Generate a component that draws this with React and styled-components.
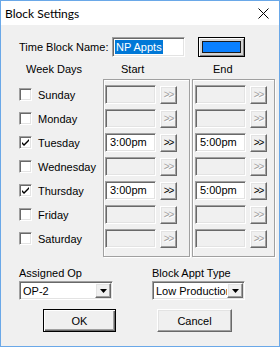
import styled, { createGlobalStyle, css } from "styled-components";

const GlobalStyle = createGlobalStyle`
  html, body { margin: 0; padding: 0; background: #fff; }
  * { box-sizing: border-box; }
`;

const days = [
  { name: "Sunday", on: false },
  { name: "Monday", on: false },
  { name: "Tuesday", on: true, start: "3:00pm", end: "5:00pm" },
  { name: "Wednesday", on: false },
  { name: "Thursday", on: true, start: "3:00pm", end: "5:00pm" },
  { name: "Friday", on: false },
  { name: "Saturday", on: false },
];

const sunken = css`
  border: 1px solid;
  border-color: #a0a0a0 #fff #fff #a0a0a0;
  box-shadow: inset 1px 1px 0 #696969, inset -1px -1px 0 #e3e3e3;
`;

const raised = css`
  border: 1px solid;
  border-color: #fff #696969 #696969 #fff;
  box-shadow: inset -1px -1px 0 #a0a0a0, inset 1px 1px 0 #e3e3e3;
  background: #f0f0f0;
`;

const Window = styled.div`
  width: 280px;
  height: 347px;
  border: 1px solid #6aa8e8;
  background: #f0f0f0;
  display: flex;
  flex-direction: column;
  font-family: "Liberation Sans", Arial, sans-serif;
  font-size: 11px;
  color: #000;
`;

const TitleBar = styled.div`
  height: 24px;
  background: #fff;
  display: flex;
  align-items: center;
  justify-content: space-between;
  padding: 0 10px 0 4px;
`;

const Title = styled.div`
  font-family: Lato, "Noto Sans", sans-serif;
  font-size: 12px;
`;

const Body = styled.div`
  padding: 12px 0 0 17px;
  display: flex;
  flex-direction: column;
`;

const NameRow = styled.div`
  display: flex;
  align-items: center;
  height: 20px;
`;

const NameLabel = styled.div`
  width: 94px;
  padding-left: 1px;
`;

const NameInput = styled.div`
  ${sunken};
  width: 73px;
  height: 20px;
  background: #fff;
  padding: 2px 0 2px 2px;
  display: flex;
`;

const Selected = styled.span`
  background: #0078d7;
  color: #fff;
  padding: 0 1px;
  line-height: 14px;
`;

const ColorButton = styled.div`
  margin-left: 13px;
  width: 47px;
  height: 20px;
  border: 1px solid #000;
  background: #d4d4d4;
  box-shadow: inset 1px 1px 0 #fff, inset -1px -1px 0 #808080;
  padding: 3px;
`;

const Swatch = styled.div`
  width: 100%;
  height: 100%;
  background: #0a80ff;
  border: 1px solid #1a1a1a;
`;

const HeaderRow = styled.div`
  display: grid;
  grid-template-columns: 83px 89px 83px;
  margin-top: 6px;
  height: 13px;
  line-height: 13px;
`;

const Header = styled.div`
  padding-left: ${(p) => p.$indent}px;
`;

const Main = styled.div`
  display: grid;
  grid-template-columns: 83px 87px 83px;
  column-gap: 2px;
  margin-top: 3px;
`;

const DayList = styled.div`
  display: flex;
  flex-direction: column;
  gap: 5px;
  padding-top: 6px;
`;

const DayRow = styled.label`
  height: 19px;
  display: flex;
  align-items: center;
  gap: 6px;
  padding-left: 1px;
`;

const Check = styled.span`
  ${sunken};
  width: 13px;
  height: 13px;
  background: #fff;
  display: flex;
  align-items: center;
  justify-content: center;
`;

const Frame = styled.div`
  height: 178px;
  border: 1px solid #a0a0a0;
  box-shadow: inset 1px 1px 0 #fff, 1px 1px 0 #fff;
  padding: 5px 0 0 ${(p) => p.$pad}px;
  display: flex;
  flex-direction: column;
  gap: 5px;
`;

const TimeRow = styled.div`
  display: flex;
  align-items: center;
  gap: 4px;
  height: 19px;
`;

const TimeInput = styled.div`
  ${sunken};
  width: 51px;
  height: 19px;
  background: ${(p) => (p.$on ? "#fff" : "#f0f0f0")};
  padding: 0 0 0 4px;
  line-height: 17px;
`;

const Arrow = styled.div`
  ${raised};
  width: 17px;
  height: 18px;
  display: flex;
  align-items: center;
  justify-content: center;
  font-size: 10px;
  letter-spacing: -1px;
  color: ${(p) => (p.$on ? "#000" : "#a0a0a0")};
  text-shadow: ${(p) => (p.$on ? "none" : "1px 1px 0 #fff")};
`;

const Bottom = styled.div`
  display: grid;
  grid-template-columns: 94px 93px;
  column-gap: 39px;
  margin-top: 10px;
  padding-left: 1px;
`;

const Field = styled.div`
  display: flex;
  flex-direction: column;
  gap: 2px;
`;

const Select = styled.div`
  ${sunken};
  height: 19px;
  background: #fff;
  display: flex;
  align-items: center;
  padding: 0 1px 0 3px;
  overflow: hidden;
`;

const SelectText = styled.span`
  flex: 1;
  min-width: 0;
  white-space: nowrap;
  overflow: hidden;
`;

const DropButton = styled.div`
  ${raised};
  width: 16px;
  height: 15px;
  flex-shrink: 0;
  display: flex;
  align-items: center;
  justify-content: center;
`;

const Buttons = styled.div`
  display: flex;
  gap: 41px;
  margin-top: 9px;
  padding-left: 25px;
`;

const PushButton = styled.div`
  ${raised};
  width: ${(p) => p.$w}px;
  height: 23px;
  display: flex;
  align-items: center;
  justify-content: center;
  ${(p) =>
    p.$default &&
    css`
      border: 1px solid #000;
      box-shadow: inset 1px 1px 0 #fff, inset -1px -1px 0 #696969,
        inset -2px -2px 0 #a0a0a0;
    `}
`;

const CloseIcon = () => (
  <svg width="11" height="11" viewBox="0 0 11 11">
    <path d="M0.5 0.5L10.5 10.5M10.5 0.5L0.5 10.5" stroke="#000" strokeWidth="1" />
  </svg>
);

const Tick = () => (
  <svg width="9" height="9" viewBox="0 0 9 9">
    <path d="M1 4l2 2 5-5v2l-5 5-2-2z" fill="#000" />
  </svg>
);

const Caret = () => (
  <svg width="7" height="4" viewBox="0 0 7 4">
    <path d="M0 0h7L3.5 4z" fill="#000" />
  </svg>
);

export default function App() {
  return (
    <Window>
      <GlobalStyle />
      <TitleBar>
        <Title>Block Settings</Title>
        <CloseIcon />
      </TitleBar>
      <Body>
        <NameRow>
          <NameLabel>Time Block Name:</NameLabel>
          <NameInput>
            <Selected>NP Appts</Selected>
          </NameInput>
          <ColorButton>
            <Swatch />
          </ColorButton>
        </NameRow>

        <HeaderRow>
          <Header $indent={8}>Week Days</Header>
          <Header $indent={20}>Start</Header>
          <Header $indent={23}>End</Header>
        </HeaderRow>

        <Main>
          <DayList>
            {days.map((d) => (
              <DayRow key={d.name}>
                <Check>{d.on && <Tick />}</Check>
                {d.name}
              </DayRow>
            ))}
          </DayList>
          <Frame $pad={1}>
            {days.map((d) => (
              <TimeRow key={d.name}>
                <TimeInput $on={d.on}>{d.start}</TimeInput>
                <Arrow $on={d.on}>&gt;&gt;</Arrow>
              </TimeRow>
            ))}
          </Frame>
          <Frame $pad={2}>
            {days.map((d) => (
              <TimeRow key={d.name}>
                <TimeInput $on={d.on}>{d.end}</TimeInput>
                <Arrow $on={d.on}>&gt;&gt;</Arrow>
              </TimeRow>
            ))}
          </Frame>
        </Main>

        <Bottom>
          <Field>
            <div>Assigned Op</div>
            <Select>
              <SelectText>OP-2</SelectText>
              <DropButton>
                <Caret />
              </DropButton>
            </Select>
          </Field>
          <Field>
            <div>Block Appt Type</div>
            <Select>
              <SelectText>Low Production</SelectText>
              <DropButton>
                <Caret />
              </DropButton>
            </Select>
          </Field>
        </Bottom>

        <Buttons>
          <PushButton $w={73} $default>
            OK
          </PushButton>
          <PushButton $w={75}>Cancel</PushButton>
        </Buttons>
      </Body>
    </Window>
  );
}
